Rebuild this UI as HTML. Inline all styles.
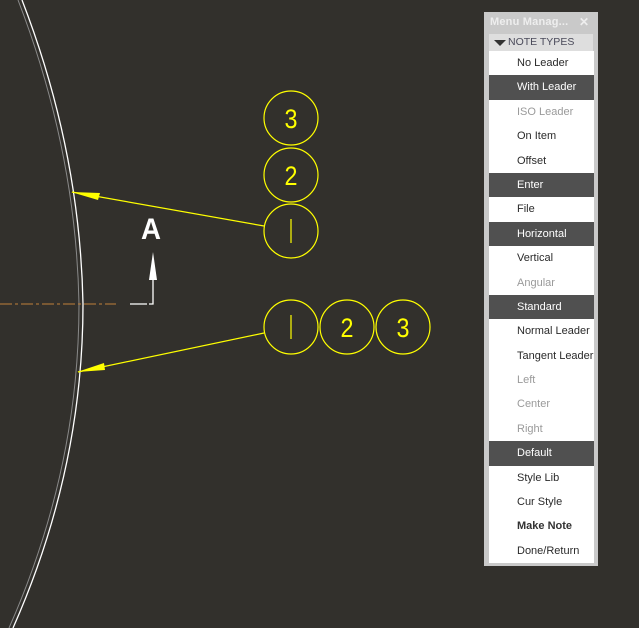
<!DOCTYPE html>
<html><head><meta charset="utf-8"><style>
body{margin:0;width:639px;height:628px;background:#32302c;overflow:hidden;position:relative;font-family:"Liberation Sans",sans-serif}
svg{position:absolute;left:0;top:0}
#mm{position:absolute;left:484px;top:12px;width:114px;height:554px;background:#c9c9c9}
#tt{position:absolute;left:6px;top:4px;font-size:11px;font-weight:bold;color:#eeeeee;letter-spacing:.2px}
#tx{position:absolute;right:9px;top:3px;font-size:12px;font-weight:bold;color:#eeeeee}
#hd{position:absolute;left:5px;top:22px;width:104px;height:17px;background:#dedede;font-size:10.5px;color:#4a4a5a;line-height:17px}
#hd span{position:absolute;left:19px}
#hd i{position:absolute;left:5px;top:6px;border-left:6px solid transparent;border-right:6px solid transparent;border-top:6px solid #333}
#it{position:absolute;left:5px;top:39px;width:105px;height:512px;background:#fff}
.r{height:24.4px;line-height:25px;font-size:11px;color:#2a2a2a;padding-left:28px;box-sizing:border-box;white-space:nowrap}
.d{background:#505050;color:#fff}
.g{color:#9a9a9a}
.b{font-weight:bold;color:#333}
</style></head><body>
<svg width="639" height="628">
<path d="M18 0 Q76 150 79 304 Q79 470 9 628" fill="none" stroke="#8a8a8a" stroke-width="1"/>
<path d="M22 0 Q80 150 83 304 Q83 470 13 628" fill="none" stroke="#fff" stroke-width="1.3"/>
<line x1="0" y1="304" x2="116" y2="304" stroke="#c0803a" stroke-width="1" stroke-dasharray="12,3,3,3"/>
<path d="M130 304 H147 M149 304 H153 V280" stroke="#fff" stroke-width="1.3" fill="none"/>
<polygon points="153,252 149,280 157,280" fill="#fff"/>
<text x="141" y="239" font-family="Liberation Sans" font-size="30" font-weight="bold" fill="#fff" textLength="20" lengthAdjust="spacingAndGlyphs">A</text>
<g fill="none" stroke="#ffff00" stroke-width="1.2">
<circle cx="291" cy="118" r="27"/><circle cx="291" cy="175" r="27"/><circle cx="291" cy="231" r="27"/>
<circle cx="291" cy="327" r="27"/><circle cx="347" cy="327" r="27"/><circle cx="403" cy="327" r="27"/>
<line x1="264" y1="226" x2="72" y2="192"/><line x1="264" y1="333" x2="78" y2="372"/>
<line x1="291" y1="219" x2="291" y2="243"/><line x1="291" y1="315" x2="291" y2="339"/>
</g>
<polygon points="71,192 100,193 98,200" fill="#ffff00"/>
<polygon points="77,372 104,363 105,370" fill="#ffff00"/>
<g fill="#ffff00" font-family="Liberation Sans" font-size="27" text-anchor="middle">
<text x="291" y="128" textLength="13" lengthAdjust="spacingAndGlyphs">3</text><text x="291" y="185" textLength="13" lengthAdjust="spacingAndGlyphs">2</text>
<text x="347" y="337" textLength="13" lengthAdjust="spacingAndGlyphs">2</text><text x="403" y="337" textLength="13" lengthAdjust="spacingAndGlyphs">3</text>
</g>
</svg>
<div id="mm">
<div id="tt">Menu Manag...</div><div id="tx">✕</div>
<div id="hd"><i></i><span>NOTE TYPES</span></div>
<div id="it">
<div class="r">No Leader</div>
<div class="r d">With Leader</div>
<div class="r g">ISO Leader</div>
<div class="r">On Item</div>
<div class="r">Offset</div>
<div class="r d">Enter</div>
<div class="r">File</div>
<div class="r d">Horizontal</div>
<div class="r">Vertical</div>
<div class="r g">Angular</div>
<div class="r d">Standard</div>
<div class="r">Normal Leader</div>
<div class="r">Tangent Leader</div>
<div class="r g">Left</div>
<div class="r g">Center</div>
<div class="r g">Right</div>
<div class="r d">Default</div>
<div class="r">Style Lib</div>
<div class="r">Cur Style</div>
<div class="r b">Make Note</div>
<div class="r">Done/Return</div>
</div>
</div>
</body></html>
